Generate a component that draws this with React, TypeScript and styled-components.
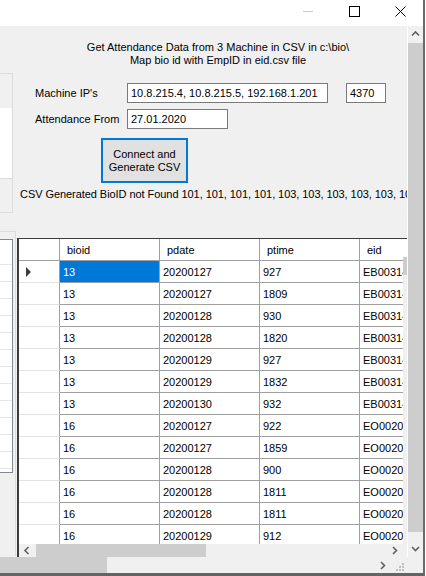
import React from "react";
import styled, { createGlobalStyle } from "styled-components";

const GlobalStyle = createGlobalStyle`
  body {
    margin: 0;
    background: #ffffff;
    font-family: "Liberation Sans", Arial, sans-serif;
    font-size: 11px;
    color: #000;
  }
`;

const Window = styled.div`
  box-sizing: border-box;
  width: 425px;
  height: 576px;
  display: flex;
  flex-direction: column;
  background: #fff;
  border-right: 2px solid #6a6a6a;
  border-bottom: 3px solid #646464;
  overflow: hidden;
`;

const TitleBar = styled.div`
  height: 26px;
  flex-shrink: 0;
  display: flex;
  justify-content: flex-end;
  background: #fff;
`;

const CaptionButton = styled.div`
  width: 46px;
  height: 22px;
  display: flex;
  align-items: center;
  justify-content: center;
`;

const Body = styled.div`
  height: 531px;
  flex-shrink: 0;
  display: flex;
`;

const Client = styled.div`
  width: 407px;
  flex-shrink: 0;
  display: flex;
  background: #f0f0f0;
  overflow: hidden;
`;

const LeftStrip = styled.div`
  width: 17px;
  flex-shrink: 0;
  display: flex;
  flex-direction: column;
`;

const GroupBox = styled.div`
  margin-top: 47px;
  width: 12px;
  border: 1px solid #dcdcdc;
  border-left: none;
  display: flex;
  flex-direction: column;
`;

const GroupPart = styled.div<{ $white?: boolean; $h: number; $line?: boolean }>`
  height: ${(p) => p.$h}px;
  background: ${(p) => (p.$white ? "#fff" : "#f0f0f0")};
  border-top: ${(p) => (p.$line ? "1px solid #dcdcdc" : "none")};
`;

const SidePanel = styled.div`
  margin-top: 18px;
  width: 16px;
  height: 325px;
  border-top: 1px solid #dcdcdc;
  border-right: 1px solid #dcdcdc;
  box-sizing: border-box;
`;

const ListBox = styled.div`
  margin-top: 7px;
  width: 13px;
  height: 234px;
  box-sizing: border-box;
  border: 1px solid #828790;
  border-left: none;
  background: #fff
    repeating-linear-gradient(
      to bottom,
      transparent 0,
      transparent 16px,
      #e6e6e6 16px,
      #e6e6e6 17px
    );
  background-position: 0 8px;
`;

const Main = styled.div`
  flex: 1;
  min-width: 0;
  display: flex;
  flex-direction: column;
`;

const Heading = styled.div`
  margin-top: 15px;
  padding-left: 12px;
  text-align: center;
  line-height: 13px;
  white-space: nowrap;
`;

const Form = styled.div`
  margin-top: 16px;
  padding-left: 18px;
  display: grid;
  grid-template-columns: 92px auto;
  row-gap: 6px;
  align-items: center;
`;

const FieldLabel = styled.div`
  line-height: 20px;
  white-space: nowrap;
`;

const FieldLine = styled.div`
  display: flex;
  gap: 18px;
`;

const TextBox = styled.div<{ $w: number }>`
  box-sizing: border-box;
  width: ${(p) => p.$w}px;
  height: 20px;
  padding: 0 3px;
  line-height: 18px;
  border: 1px solid #7a7a7a;
  background: #fff;
  white-space: nowrap;
  overflow: hidden;
`;

const ActionButton = styled.div`
  margin: 9px 0 0 84px;
  box-sizing: border-box;
  width: 87px;
  height: 45px;
  border: 2px solid #0078d7;
  background: #e1e1e1;
  display: flex;
  align-items: center;
  justify-content: center;
  text-align: center;
  line-height: 13px;
`;

const Status = styled.div`
  margin-top: 5px;
  padding-left: 3px;
  line-height: 13px;
  letter-spacing: -0.06px;
  white-space: nowrap;
`;

const DataGrid = styled.div`
  margin-top: 37px;
  flex: 1;
  min-height: 0;
  display: flex;
  flex-direction: column;
  border-top: 1px solid #3c3c3c;
  border-left: 2px solid #3c3c3c;
  background: #fff;
  overflow: hidden;
`;

const GridView = styled.div`
  flex: 1;
  min-height: 0;
  display: flex;
`;

const TableClip = styled.div`
  width: 384px;
  flex-shrink: 0;
  overflow: hidden;
`;

const Table = styled.div`
  width: 441px;
  display: grid;
  grid-template-columns: 41px repeat(4, 100px);
  grid-auto-rows: 22px;
`;

const Cell = styled.div<{ $head?: boolean; $rowHead?: boolean; $selected?: boolean }>`
  box-sizing: border-box;
  display: flex;
  align-items: center;
  padding-left: ${(p) => (p.$head ? 7 : p.$rowHead ? 7 : 3)}px;
  border-right: 1px solid #a0a0a0;
  border-bottom: 1px solid ${(p) => (p.$rowHead && !p.$head ? "#e3e3e3" : "#a0a0a0")};
  background: ${(p) => (p.$selected ? "#0078d7" : "#fff")};
  color: ${(p) => (p.$selected ? "#fff" : "#000")};
  white-space: nowrap;
  overflow: hidden;
`;

const GridVScroll = styled.div`
  width: 4px;
  flex-shrink: 0;
  display: flex;
  flex-direction: column;
  background: #f0f0f0;
`;

const GridVSegment = styled.div<{ $h: number; $c: string }>`
  height: ${(p) => p.$h}px;
  background: ${(p) => p.$c};
`;

const GridHScroll = styled.div`
  height: 13px;
  flex-shrink: 0;
  display: flex;
  background: #f0f0f0;
`;

const ScrollButton = styled.div<{ $w?: number; $h?: number }>`
  width: ${(p) => p.$w ?? 17}px;
  height: ${(p) => (p.$h ? `${p.$h}px` : "auto")};
  flex-shrink: 0;
  display: flex;
  align-items: center;
  justify-content: center;
`;

const Thumb = styled.div<{ $w?: number; $h?: number }>`
  width: ${(p) => (p.$w ? `${p.$w}px` : "auto")};
  height: ${(p) => (p.$h ? `${p.$h}px` : "auto")};
  flex-shrink: 0;
  background: #cdcdcd;
`;

const Track = styled.div`
  flex: 1;
`;

const VScroll = styled.div`
  width: 15px;
  flex-shrink: 0;
  border-left: 1px solid #fff;
  display: flex;
  flex-direction: column;
  background: #f0f0f0;
`;

const HScroll = styled.div`
  height: 16px;
  flex-shrink: 0;
  display: flex;
  background: #f0f0f0;
`;

const HTrack = styled.div`
  width: 374px;
  flex-shrink: 0;
  display: flex;
`;

const Corner = styled.div`
  width: 16px;
  flex-shrink: 0;
  display: flex;
  align-items: flex-end;
  justify-content: center;
  padding-bottom: 2px;
  box-sizing: border-box;
`;

type Dir = "up" | "down" | "left" | "right";

const chevronPoints: Record<Dir, string> = {
  up: "1,5.5 4.5,2 8,5.5",
  down: "1,3 4.5,6.5 8,3",
  left: "5.5,1 2,4.5 5.5,8",
  right: "3,1 6.5,4.5 3,8",
};

const Chevron = ({ dir }: { dir: Dir }) => (
  <svg width="9" height="9" viewBox="0 0 9 9">
    <polyline points={chevronPoints[dir]} fill="none" stroke="#606060" strokeWidth="1.6" />
  </svg>
);

const Grip = () => (
  <svg width="10" height="10" viewBox="0 0 10 10">
    {[
      [8, 0],
      [8, 3],
      [5, 3],
      [8, 6],
      [5, 6],
      [2, 6],
    ].map(([x, y]) => (
      <rect key={`${x}-${y}`} x={x} y={y + 2} width="2" height="2" fill="#c0c0c0" />
    ))}
  </svg>
);

const rows: [string, string, string, string][] = [
  ["13", "20200127", "927", "EB003141"],
  ["13", "20200127", "1809", "EB003141"],
  ["13", "20200128", "930", "EB003141"],
  ["13", "20200128", "1820", "EB003141"],
  ["13", "20200129", "927", "EB003141"],
  ["13", "20200129", "1832", "EB003141"],
  ["13", "20200130", "932", "EB003141"],
  ["16", "20200127", "922", "EO002011"],
  ["16", "20200127", "1859", "EO002011"],
  ["16", "20200128", "900", "EO002011"],
  ["16", "20200128", "1811", "EO002011"],
  ["16", "20200128", "1811", "EO002011"],
  ["16", "20200129", "912", "EO002011"],
];

const App = () => {
  return (
    <>
      <GlobalStyle />
      <Window>
        <TitleBar>
          <CaptionButton>
            <svg width="10" height="10" viewBox="0 0 10 10">
              <line x1="0" y1="5.5" x2="10" y2="5.5" stroke="#cccccc" strokeWidth="1" />
            </svg>
          </CaptionButton>
          <CaptionButton>
            <svg width="11" height="11" viewBox="0 0 11 11">
              <rect x="0.5" y="0.5" width="10" height="10" fill="none" stroke="#000" strokeWidth="1" />
            </svg>
          </CaptionButton>
          <CaptionButton>
            <svg width="11" height="11" viewBox="0 0 11 11">
              <path d="M0.5 0.5 L10.5 10.5 M10.5 0.5 L0.5 10.5" stroke="#000" strokeWidth="1" />
            </svg>
          </CaptionButton>
        </TitleBar>

        <Body>
          <Client>
            <LeftStrip>
              <GroupBox>
                <GroupPart $h={34} />
                <GroupPart $h={70} $white />
                <GroupPart $h={33} $line />
              </GroupBox>
              <SidePanel>
                <ListBox />
              </SidePanel>
            </LeftStrip>

            <Main>
              <Heading>
                {"Get Attendance Data from 3 Machine in CSV in c:\\bio\\"}
                <br />
                Map bio id with EmpID in eid.csv file
              </Heading>

              <Form>
                <FieldLabel>Machine IP's</FieldLabel>
                <FieldLine>
                  <TextBox $w={201}>10.8.215.4, 10.8.215.5, 192.168.1.201</TextBox>
                  <TextBox $w={40}>4370</TextBox>
                </FieldLine>
                <FieldLabel>Attendance From</FieldLabel>
                <FieldLine>
                  <TextBox $w={101}>27.01.2020</TextBox>
                </FieldLine>
              </Form>

              <ActionButton>
                Connect and
                <br />
                Generate CSV
              </ActionButton>

              <Status>
                CSV Generated BioID not Found 101, 101, 101, 101, 103, 103, 103, 103, 103, 103, 103
              </Status>

              <DataGrid>
                <GridView>
                  <TableClip>
                    <Table>
                      <Cell $head $rowHead />
                      <Cell $head>bioid</Cell>
                      <Cell $head>pdate</Cell>
                      <Cell $head>ptime</Cell>
                      <Cell $head>eid</Cell>
                      {rows.map((r, i) => (
                        <React.Fragment key={i}>
                          <Cell $rowHead>
                            {i === 0 && (
                              <svg width="6" height="10" viewBox="0 0 6 10">
                                <polygon points="0,0 5,5 0,10" fill="#3c3c3c" />
                              </svg>
                            )}
                          </Cell>
                          <Cell $selected={i === 0}>{r[0]}</Cell>
                          <Cell>{r[1]}</Cell>
                          <Cell>{r[2]}</Cell>
                          <Cell>{r[3]}</Cell>
                        </React.Fragment>
                      ))}
                    </Table>
                  </TableClip>
                  <GridVScroll>
                    <GridVSegment $h={18} $c="#ffffff" />
                    <GridVSegment $h={18} $c="#cdcdcd" />
                  </GridVScroll>
                </GridView>
                <GridHScroll>
                  <ScrollButton>
                    <Chevron dir="left" />
                  </ScrollButton>
                  <Thumb $w={170} />
                  <Track />
                  <ScrollButton>
                    <Chevron dir="right" />
                  </ScrollButton>
                  <ScrollButton $w={4} />
                </GridHScroll>
              </DataGrid>
            </Main>
          </Client>

          <VScroll>
            <ScrollButton $w={15} $h={17}>
              <Chevron dir="up" />
            </ScrollButton>
            <Thumb $h={489} />
            <Track />
            <ScrollButton $w={15} $h={17}>
              <Chevron dir="down" />
            </ScrollButton>
          </VScroll>
        </Body>

        <HScroll>
          <HTrack>
            <Thumb $w={107} />
          </HTrack>
          <ScrollButton>
            <Chevron dir="right" />
          </ScrollButton>
          <Corner>
            <Grip />
          </Corner>
        </HScroll>
      </Window>
    </>
  );
};

export default App;
